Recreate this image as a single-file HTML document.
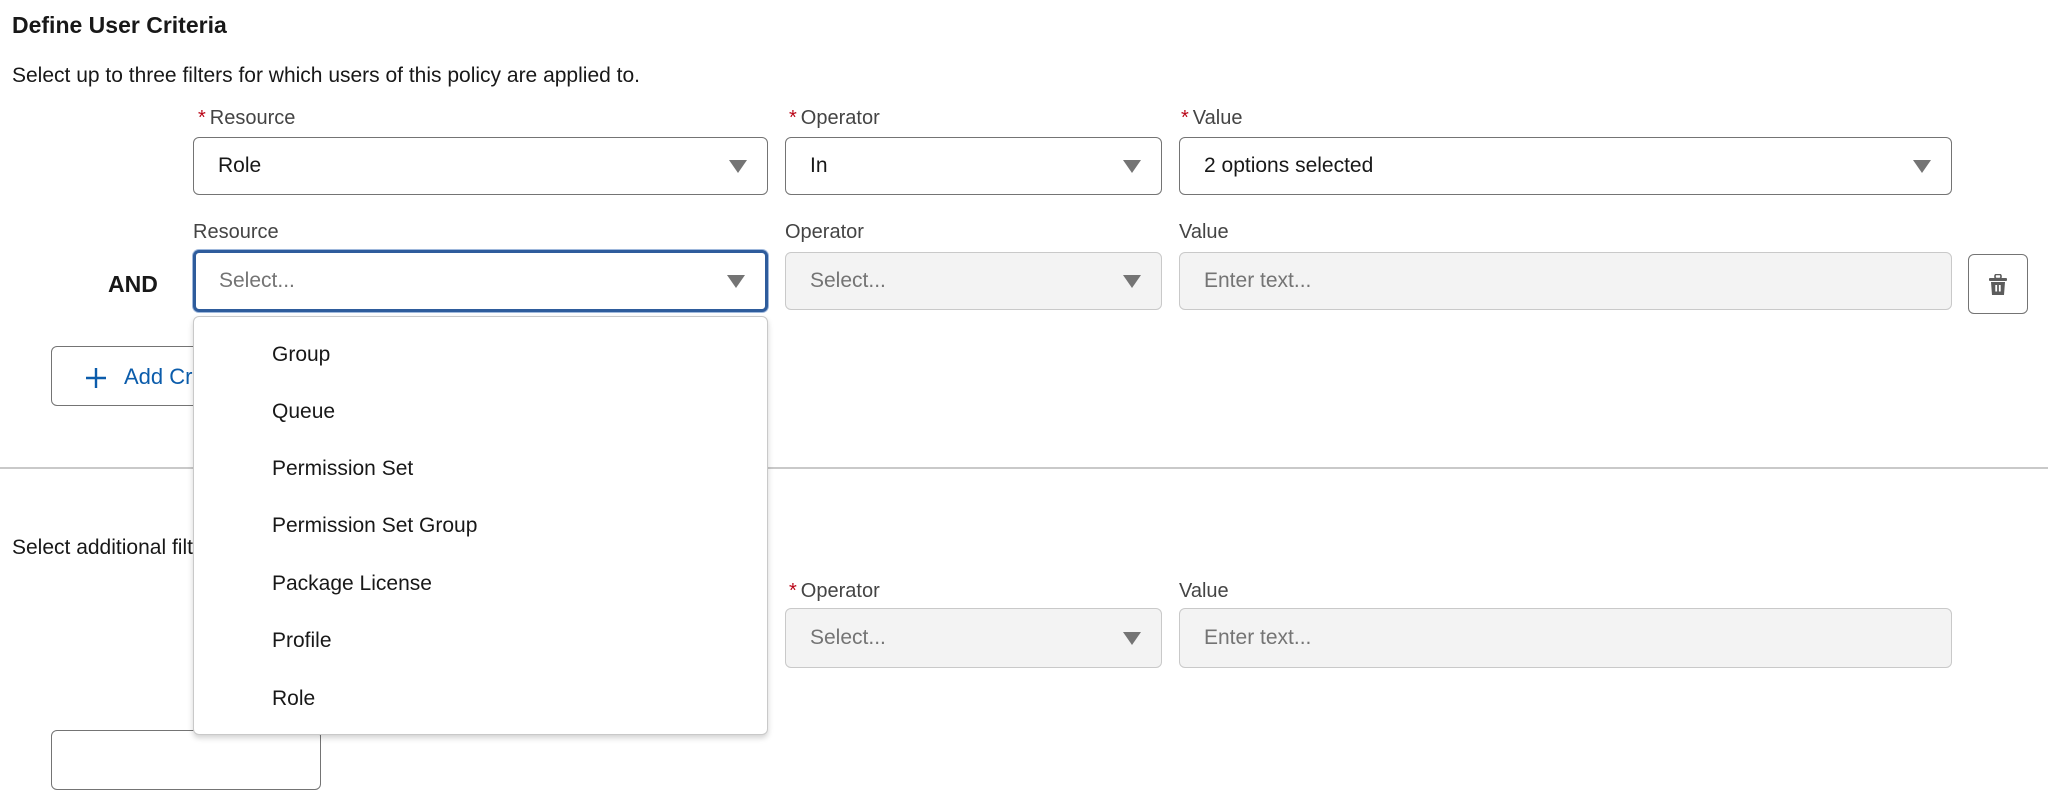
<!DOCTYPE html>
<html><head><meta charset="utf-8"><style>
*{box-sizing:border-box;margin:0;padding:0}
body{width:2048px;height:748px;overflow:hidden;background:#fff;font-family:"Liberation Sans",Arial,sans-serif;color:#181818;position:relative}
.a{position:absolute;white-space:nowrap}
.t{font-weight:bold;font-size:23px;left:12px;top:12px}
.p{font-size:21px;left:12px}
.lbl{font-size:20px;color:#444}
.lbl i{color:#ba0517;font-style:normal;margin-right:4px}
.box{position:absolute;border:1.5px solid #747474;border-radius:6px;background:#fff;font-size:21px;padding-left:24px;display:flex;align-items:center}
.dis{background:#f3f3f3;border-color:#c9c9c9;color:#747474}
.ph{color:#747474}
.arr{position:absolute;right:20px;top:50%;margin-top:-6px;width:0;height:0;border-left:9px solid transparent;border-right:9px solid transparent;border-top:13px solid #747474}
.focus{border:3px solid #2e5c9c;box-shadow:0 0 0 1px #9fb8dc}
.dd{position:absolute;left:193px;top:316px;width:575px;height:419px;border:1.5px solid #c9c9c9;border-radius:6px;background:#fff;box-shadow:0 3px 6px rgba(0,0,0,.18)}
.dd div{position:absolute;left:78px;font-size:21px;color:#181818}
.btn{position:absolute;border:1.5px solid #747474;border-radius:6px;background:#fff}
</style></head><body>
<div class="a t">Define User Criteria</div>
<div class="a p" style="top:64px">Select up to three filters for which users of this policy are applied to.</div>

<div class="a lbl" style="left:198px;top:107px"><i>*</i>Resource</div>
<div class="a lbl" style="left:789px;top:107px"><i>*</i>Operator</div>
<div class="a lbl" style="left:1181px;top:107px"><i>*</i>Value</div>
<div class="box" style="left:193px;top:137px;width:575px;height:58px">Role<span class="arr"></span></div>
<div class="box" style="left:785px;top:137px;width:377px;height:58px">In<span class="arr"></span></div>
<div class="box" style="left:1179px;top:137px;width:773px;height:58px">2 options selected<span class="arr"></span></div>

<div class="a lbl" style="left:193px;top:221px">Resource</div>
<div class="a lbl" style="left:785px;top:221px">Operator</div>
<div class="a lbl" style="left:1179px;top:221px">Value</div>
<div class="a" style="left:108px;top:271px;font-weight:bold;font-size:23px">AND</div>
<div class="box focus" style="left:193px;top:250px;width:575px;height:62px;padding-left:23px"><span class="ph">Select...</span><span class="arr"></span></div>
<div class="box dis" style="left:785px;top:252px;width:377px;height:58px">Select...<span class="arr"></span></div>
<div class="box dis" style="left:1179px;top:252px;width:773px;height:58px">Enter text...</div>
<div class="btn" style="left:1968px;top:254px;width:60px;height:60px">
<svg style="position:absolute;left:19px;top:19px" width="20" height="22" viewBox="0 0 20 22"><rect x="7" y="0.5" width="6" height="4" rx="1.5" fill="none" stroke="#5c5c5c" stroke-width="1.6"/><rect x="1" y="4" width="18" height="3" rx="1" fill="#5c5c5c"/><path d="M3 8h14l-1 13H4z" fill="#5c5c5c"/><rect x="7.3" y="11" width="1.8" height="6.5" fill="#fff"/><rect x="10.9" y="11" width="1.8" height="6.5" fill="#fff"/></svg></div>

<div class="btn" style="left:51px;top:346px;width:300px;height:60px"><svg style="position:absolute;left:33px;top:20px" width="22" height="22" viewBox="0 0 22 22"><path d="M11 1v20M1 11h20" stroke="#0b5cab" stroke-width="2.4"/></svg><span class="a" style="left:72px;top:17px;font-size:22px;color:#0b5cab">Add Criteria</span></div>

<div class="a" style="left:0;top:467px;width:2048px;height:1.5px;background:#c9c9c9"></div>
<div class="a p" style="top:536px">Select additional filters</div>
<div class="a lbl" style="left:789px;top:580px"><i>*</i>Operator</div>
<div class="a lbl" style="left:1179px;top:580px">Value</div>
<div class="box dis" style="left:785px;top:608px;width:377px;height:60px">Select...<span class="arr"></span></div>
<div class="box dis" style="left:1179px;top:608px;width:773px;height:60px">Enter text...</div>
<div class="btn" style="left:51px;top:730px;width:270px;height:60px"></div>

<div class="dd">
<div style="top:26px">Group</div>
<div style="top:83px">Queue</div>
<div style="top:140px">Permission Set</div>
<div style="top:197px">Permission Set Group</div>
<div style="top:255px">Package License</div>
<div style="top:312px">Profile</div>
<div style="top:370px">Role</div>
</div>
</body></html>
